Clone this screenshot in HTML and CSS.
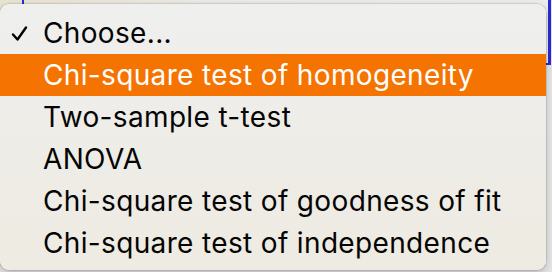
FILE: index.html
```html
<!DOCTYPE html>
<html>
<head>
<meta charset="utf-8">
<link rel="stylesheet" href="styles.css">
</head>
<body>
<div class="backdrop">
  <div class="select">
    <div class="caret"></div>
  </div>
</div>
<div class="menu">
  <div class="item checked">
    <svg class="check" width="20" height="20" viewBox="0 0 20 20"><path d="M3 10.5 L7.5 15.5 L16 3.5" fill="none" stroke="#000" stroke-width="2.4" stroke-linecap="round" stroke-linejoin="round"/></svg>
    <span class="label">Choose...</span>
  </div>
  <div class="item active"><span class="label">Chi-square test of homogeneity</span></div>
  <div class="item"><span class="label">Two-sample t-test</span></div>
  <div class="item"><span class="label">ANOVA</span></div>
  <div class="item"><span class="label">Chi-square test of goodness of fit</span></div>
  <div class="item"><span class="label">Chi-square test of independence</span></div>
</div>
</body>
</html>
```
FILE: styles.css
```css
html, body {
  margin: 0;
  padding: 0;
  width: 552px;
  height: 272px;
  overflow: hidden;
  background: #e6e6e6;
}
.backdrop {
  width: 552px;
  height: 272px;
}
.select {
  width: 548px;
  height: 63px;
  background: linear-gradient(90deg, #e9e3d2 0%, #ecebe7 40%, #ededed 100%);
  border-right: 3px solid #2a2ad8;
  border-bottom: 2px solid #2a2ad8;
  box-sizing: content-box;
}
.caret {
  margin-left: 22px;
  width: 2px;
  height: 5px;
  background: #2a2ad8;
}
.menu {
  position: absolute;
  left: 0;
  top: 4px;
  width: 546px;
  height: 266px;
  box-sizing: border-box;
  padding-top: 8px;
  border-radius: 9px;
  background: linear-gradient(180deg, #efefee 0%, #eeece6 60%, #eeebe2 100%);
  box-shadow: 0 0 0 0.5px rgba(0,0,0,0.18), 0 3px 8px rgba(0,0,0,0.22);
  font-family: Inter, "Liberation Sans", sans-serif;
  font-size: 28px;
  letter-spacing: 0.35px;
  color: #050505;
}
.item {
  position: relative;
  height: 42px;
  display: flex;
  align-items: center;
  padding-left: 43px;
}
.item.active {
  background: #f57300;
  color: #fff;
}
.check {
  position: absolute;
  left: 10px;
  top: 12px;
}
.label {
  white-space: nowrap;
  line-height: 1;
}
```
